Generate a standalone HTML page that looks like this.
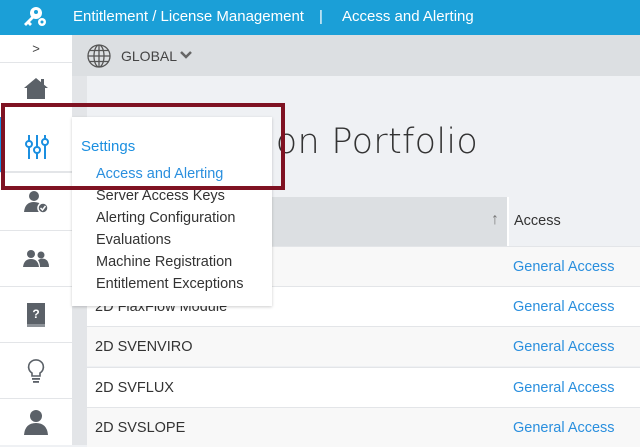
<!DOCTYPE html>
<html><head><style>
*{margin:0;padding:0;box-sizing:border-box}
body{width:640px;height:445px;overflow:hidden;font-family:"Liberation Sans",sans-serif;background:#eff1f4;position:relative}
.hdr{position:absolute;left:0;top:0;width:640px;height:35px;background:#1b9fd7;color:#fff;font-size:15px}
.hdr span{position:absolute;top:8px}
.side{position:absolute;left:0;top:35px;width:72px;height:410px;background:#fff}
.cell{position:absolute;left:0;width:72px;border-top:1px solid #e3e5e8;display:flex;align-items:center;justify-content:center}
.gbar{position:absolute;left:72px;top:35px;width:568px;height:41px;background:#dcdfe2;font-size:14px;color:#444}
.left{position:absolute;left:72px;top:76px;width:15px;height:369px;background:#e3e5e8}
.title{position:absolute;left:230px;top:122px;font-size:35px;color:#333;letter-spacing:0.3px;font-family:"DejaVu Sans",sans-serif;font-weight:200}
.th{position:absolute;left:87px;top:197px;width:420px;height:49px;background:#dcdfe2}
.th2{position:absolute;left:507px;top:197px;width:133px;height:49px;background:#eff1f4;border-left:2px solid #fff;font-size:14.5px;color:#333;padding:16px 0 0 5px}
.row{position:absolute;left:87px;width:553px;height:40px;border-top:1px solid #e3e5e8;font-size:14.5px;color:#333}
.row .a{position:absolute;left:8px;top:12px}
.row .b{position:absolute;left:426px;top:12px;color:#2a8fde}
.pop{position:absolute;left:72px;top:117px;width:200px;height:189px;background:#fff;box-shadow:0 1px 3px rgba(0,0,0,.2)}
.pop div{position:absolute;left:24px;font-size:14.5px;color:#333}
.red{position:absolute;left:1px;top:103px;width:284px;height:87px;border:4px solid #7f1222}
</style></head><body>
<div class="hdr">
<svg style="position:absolute;left:22px;top:6px" width="26" height="22" viewBox="0 0 26 22"><circle cx="14" cy="7" r="6" fill="#fff"/><circle cx="14" cy="6" r="2" fill="#1b9fd7"/><path d="M10 10 L2 18 L4 20 L6 18 L8 20 L10 18 L8 16 L12 12Z" fill="#fff"/><circle cx="20" cy="16" r="4" fill="#fff"/><circle cx="20" cy="16" r="1.5" fill="#1b9fd7"/></svg>
<span style="left:73px">Entitlement / License Management</span>
<span style="left:319px">|</span>
<span style="left:342px">Access and Alerting</span>
</div>
<div class="side">
<div class="cell" style="top:0;height:27px;border:none;color:#444;font-size:13px">&gt;</div>
<div class="cell" style="top:27px;height:50px"><svg width="26" height="24" viewBox="0 0 26 24"><path d="M13 2 L1 12 L4 12 L4 23 L22 23 L22 12 L25 12 Z" fill="#5b6168"/><rect x="18" y="3" width="3" height="6" fill="#5b6168"/></svg></div>
<div class="cell" style="top:137px;height:58px"><svg width="26" height="24" viewBox="0 0 26 24"><circle cx="11" cy="6" r="5" fill="#5b6168"/><path d="M1 22 Q2 12 11 12 Q16 12 18 15 L18 22Z" fill="#5b6168"/><circle cx="20" cy="18" r="5" fill="#5b6168" stroke="#fff" stroke-width="1.5"/><path d="M17.5 18 L19.5 20 L22.5 16" stroke="#fff" stroke-width="1.5" fill="none"/></svg></div>
<div class="cell" style="top:195px;height:56px"><svg width="26" height="20" viewBox="0 0 26 20"><circle cx="8" cy="5" r="4" fill="#5b6168"/><circle cx="18" cy="6" r="3.5" fill="#5b6168"/><path d="M0 18 Q1 10 8 10 Q15 10 16 18Z M15 11 Q18 9 22 10 Q26 12 26 18 L17 18 Q17 14 15 11Z" fill="#5b6168"/></svg></div>
<div class="cell" style="top:251px;height:56px"><svg width="20" height="26" viewBox="0 0 20 26"><rect x="1" y="1" width="18" height="22" fill="#5b6168"/><rect x="1" y="22" width="18" height="3" fill="#8d9298"/><text x="10" y="16" font-size="12" font-weight="bold" fill="#fff" text-anchor="middle" font-family="Liberation Sans">?</text></svg></div>
<div class="cell" style="top:307px;height:56px"><svg width="20" height="26" viewBox="0 0 20 26"><path d="M10 2 A7 7 0 0 1 14 15 L14 18 L6 18 L6 15 A7 7 0 0 1 10 2Z" fill="none" stroke="#5b6168" stroke-width="1.6"/><rect x="6" y="20" width="8" height="1.8" fill="#5b6168"/><rect x="7" y="23" width="6" height="1.8" fill="#5b6168"/></svg></div>
<div class="cell" style="top:363px;height:47px"><svg width="26" height="26" viewBox="0 0 26 26"><circle cx="13" cy="7" r="6" fill="#5b6168"/><path d="M1 26 Q2 14 13 14 Q24 14 25 26Z" fill="#5b6168"/></svg></div>
</div>
<div class="gbar">
<svg style="position:absolute;left:15px;top:9px" width="24" height="24" viewBox="0 0 24 24" fill="none" stroke="#555" stroke-width="1.3"><circle cx="12" cy="12" r="11"/><ellipse cx="12" cy="12" rx="5" ry="11"/><line x1="12" y1="1" x2="12" y2="23"/><line x1="1" y1="12" x2="23" y2="12"/><path d="M3 6.5 H21 M3 17.5 H21"/></svg>
<span style="position:absolute;left:49px;top:13px">GLOBAL</span>
<svg style="position:absolute;left:108px;top:15px" width="12" height="10" viewBox="0 0 12 10"><path d="M1 2 L6 7 L11 2" stroke="#666" stroke-width="2.5" fill="none"/></svg>
</div>
<div class="left"></div>
<div class="title">ation Portfolio</div>
<div class="th"><span style="position:absolute;right:8px;top:14px;color:#777;font-size:16px">↑</span></div>
<div class="th2">Access</div>
<div class="row" style="top:246px;background:#f8f8f8"><span class="b">General Access</span></div>
<div class="row" style="top:286px;background:#fff"><span class="a">2D FlaxFlow Module</span><span class="b">General Access</span></div>
<div class="row" style="top:326px;background:#f8f8f8"><span class="a">2D SVENVIRO</span><span class="b">General Access</span></div>
<div class="row" style="top:367px;background:#fff"><span class="a">2D SVFLUX</span><span class="b">General Access</span></div>
<div class="row" style="top:407px;background:#f8f8f8"><span class="a">2D SVSLOPE</span><span class="b">General Access</span></div>
<div style="position:absolute;left:3px;top:117px;width:72px;height:55px;background:#fff;border-bottom:1px solid #e3e5e8"></div>
<div class="pop">
<div style="left:9px;top:21px;color:#1b8fe0;font-size:15px">Settings</div>
<div style="top:49px;color:#2a8fde">Access and Alerting</div>
<div style="top:71px">Server Access Keys</div>
<div style="top:93px">Alerting Configuration</div>
<div style="top:115px">Evaluations</div>
<div style="top:137px">Machine Registration</div>
<div style="top:159px">Entitlement Exceptions</div>
</div>
<svg style="position:absolute;left:25px;top:133px" width="24" height="28" viewBox="0 0 24 28" fill="none" stroke="#1b8fe0" stroke-width="2"><line x1="4" y1="2" x2="4" y2="8"/><circle cx="4" cy="11" r="3"/><line x1="4" y1="14" x2="4" y2="26"/><line x1="12" y1="2" x2="12" y2="14"/><circle cx="12" cy="17" r="3"/><line x1="12" y1="20" x2="12" y2="26"/><line x1="20" y1="2" x2="20" y2="6"/><circle cx="20" cy="9" r="3"/><line x1="20" y1="12" x2="20" y2="26"/></svg>
<div style="position:absolute;left:0;top:117px;width:3px;height:55px;background:#1b8fe0"></div>
<div class="red"></div>
</body></html>
